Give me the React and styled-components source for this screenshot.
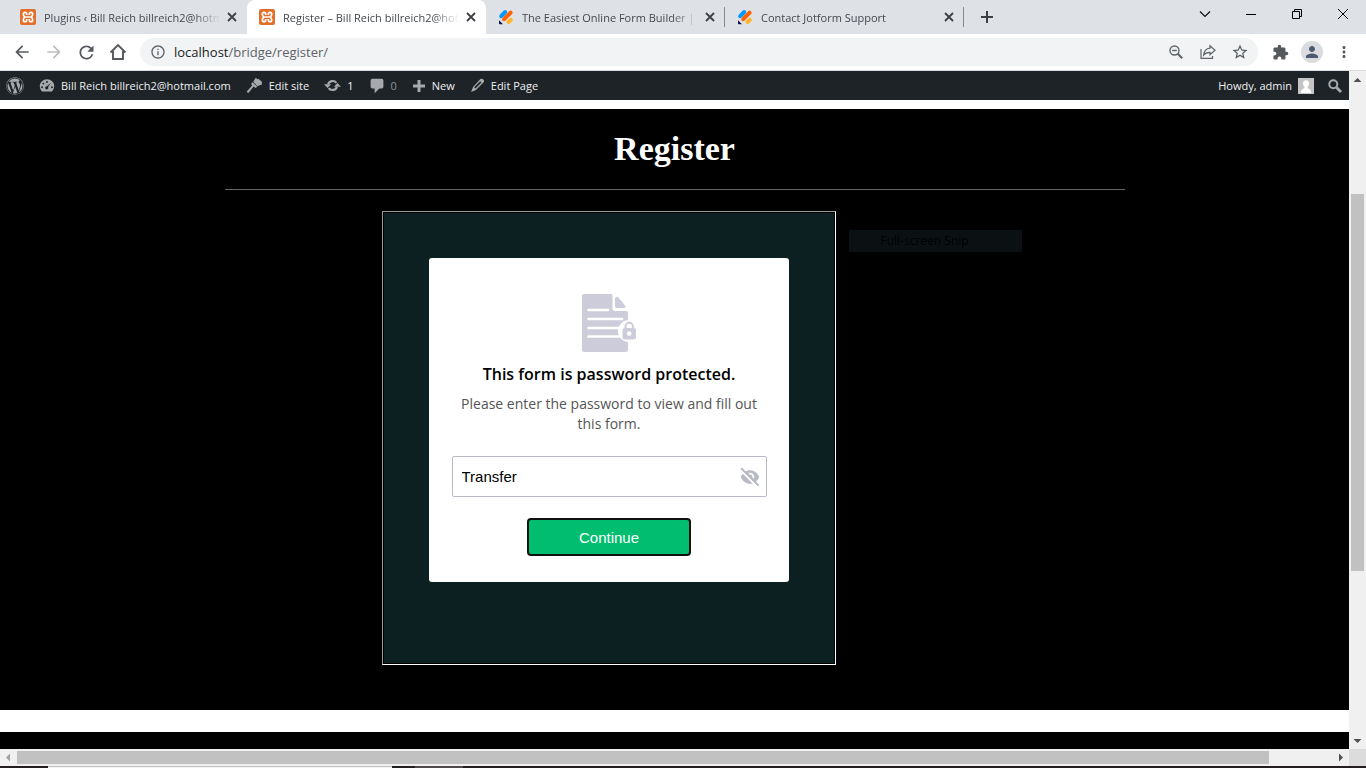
import React from "react";
import styled, { createGlobalStyle } from "styled-components";
import { FaWordpress } from "react-icons/fa";
import {
  MdArrowBack,
  MdArrowForward,
  MdRefresh,
  MdInfoOutline,
  MdStarOutline,
  MdExtension,
  MdPerson,
  MdMoreVert
} from "react-icons/md";

const XamppIcon = () => (
  <Favicon viewBox="0 0 16 16">
    <rect width="16" height="16" rx="2" fill="#e2702a" />
    <path
      d="M6.700 6V5a1.700 1.700 0 0 0-3.400 0c0 1.500.7 2 1.300 3-.6 1-1.300 1.500-1.300 3a1.700 1.700 0 0 0 3.400 0v-1M9.300 6V5a1.700 1.700 0 0 1 3.400 0c0 1.500-.7 2-1.300 3 .6 1 1.300 1.500 1.300 3a1.700 1.700 0 0 1-3.400 0v-1M5 8h6"
      fill="none"
      stroke="#fff"
      strokeWidth="1.700"
    />
  </Favicon>
);

const JotformIcon = () => (
  <Favicon viewBox="0 0 16 16">
    <g fill="none" strokeLinecap="round" strokeWidth="4">
      <path d="M3.2 7.2l4-4.2" stroke="#0099ff" />
      <path d="M6.2 10.2l6.4-6.6" stroke="#ff6100" />
      <path d="M10.6 13l2.2-2.2" stroke="#ffb629" />
    </g>
    <path d="M1 11.3l4 4H1.8a.8.8 0 0 1-.8-.8z" fill="#0a1551" />
  </Favicon>
);

const CloseIcon = () => (
  <svg width="10" height="10" viewBox="0 0 10 10">
    <path d="M1 1l8 8M9 1l-8 8" stroke="#3c4043" strokeWidth="1.800" />
  </svg>
);

const tabs = [
  { title: "Plugins ‹ Bill Reich billreich2@hotmail.com", icon: XamppIcon },
  {
    title: "Register – Bill Reich billreich2@hotmail.com",
    icon: XamppIcon,
    active: true
  },
  { title: "The Easiest Online Form Builder | Jotform", icon: JotformIcon },
  { title: "Contact Jotform Support", icon: JotformIcon }
];

const TabStrip = () => (
  <Tabs>
    {tabs.map(({ title, icon: Icon, active }, i) => (
      <Tab key={title} $active={active} $divider={i > 1}>
        <Icon />
        <TabTitle>{title}</TabTitle>
        <IconButton aria-label="Close tab" $width={16} $height={16}>
          <CloseIcon />
        </IconButton>
      </Tab>
    ))}
    <IconButton aria-label="New tab" $width={46} $height={34}>
      <svg width="12" height="12" viewBox="0 0 12 12">
        <path d="M6 0v12M0 6h12" stroke="#3c4043" strokeWidth="2" />
      </svg>
    </IconButton>
    <WindowButtons>
      <IconButton aria-label="Search tabs" $width={46} $height={28}>
        <svg width="12" height="12" viewBox="0 0 12 12">
          <path d="M1 3.500l5 5 5-5" fill="none" stroke="#111" strokeWidth="1.200" />
        </svg>
      </IconButton>
      <IconButton aria-label="Minimize" $width={46} $height={28}>
        <svg width="10" height="10" viewBox="0 0 10 10">
          <path d="M0 5.5h10" stroke="#000" />
        </svg>
      </IconButton>
      <IconButton aria-label="Restore" $width={46} $height={28}>
        <svg width="10" height="10" viewBox="0 0 10 10">
          <path
            d="M.5 2.5h7v7h-7zM2.5 2.5v-2h7v7h-2"
            fill="none"
            stroke="#000"
          />
        </svg>
      </IconButton>
      <IconButton aria-label="Close" $width={46} $height={28}>
        <svg width="10" height="10" viewBox="0 0 10 10">
          <path d="M0 0l10 10M10 0L0 10" stroke="#000" />
        </svg>
      </IconButton>
    </WindowButtons>
  </Tabs>
);

const Toolbar = () => (
  <ToolbarWrap>
    <IconButton aria-label="Back" $width={32} $height={32}>
      <MdArrowBack size={20} />
    </IconButton>
    <IconButton aria-label="Forward" $width={32} $height={32} $faded>
      <MdArrowForward size={20} />
    </IconButton>
    <IconButton aria-label="Reload" $width={32} $height={32}>
      <MdRefresh size={21} />
    </IconButton>
    <IconButton aria-label="Home" $width={32} $height={32}>
      <svg width="18" height="18" viewBox="0 0 18 18">
        <path
          d="M1.500 9.500L9 2l7.500 7.500M4 8v8h10V8"
          fill="none"
          stroke="#55595e"
          strokeWidth="1.900"
        />
      </svg>
    </IconButton>
    <AddressBar>
      <MdInfoOutline size={16} />
      <Address>
        <b>localhost</b>/bridge/register/
      </Address>
      <IconButton aria-label="Zoom" $width={32} $height={28}>
        <svg width="14" height="14" viewBox="0 0 14 14">
          <path
            d="M5.500 1a4.500 4.500 0 1 0 0 9 4.500 4.500 0 0 0 0-9zM3.200 5.500h4.600"
            fill="none"
            stroke="#5f6368"
            strokeWidth="1.400"
          />
          <path d="M8.800 8.800l4.400 4.400" stroke="#5f6368" strokeWidth="2" />
        </svg>
      </IconButton>
      <IconButton aria-label="Share" $width={32} $height={28}>
        <svg width="16" height="16" viewBox="0 0 16 16">
          <path
            d="M1 5v9.4h11.5V12M10 1.8l5 4.4-5 4.400V8.400C7.300 8.300 5.200 9 3.600 11.200 4 7.500 6.300 4.500 10 4.200z"
            fill="none"
            stroke="#5f6368"
            strokeWidth="1.2"
          />
        </svg>
      </IconButton>
      <IconButton aria-label="Bookmark" $width={32} $height={28}>
        <MdStarOutline size={18} />
      </IconButton>
    </AddressBar>
    <IconButton aria-label="Extensions" $width={32} $height={32}>
      <MdExtension size={17} />
    </IconButton>
    <IconButton aria-label="Profile" $width={32} $height={32}>
      <Profile>
        <MdPerson size={18} />
      </Profile>
    </IconButton>
    <IconButton aria-label="Menu" $width={32} $height={32}>
      <MdMoreVert size={18} />
    </IconButton>
  </ToolbarWrap>
);

const AdminBar = () => (
  <AdminWrap>
    <AdminLink href="#wp" aria-label="WordPress">
      <FaWordpress size={18} />
    </AdminLink>
    <AdminLink href="#site">
      <svg width="16" height="16" viewBox="0 0 20 20">
        <path
          d="M3.760 17h12.480A9 9 0 1 0 3.760 17z"
          fill="#a7aaad"
        />
        <g fill="#1d2327">
          <circle cx="10" cy="5" r="1.200" />
          <circle cx="5.500" cy="7" r="1.200" />
          <circle cx="3.800" cy="11.500" r="1.200" />
          <circle cx="16.200" cy="11.500" r="1.200" />
          <path d="M14.800 6l-3.400 5.200a2 2 0 1 1-1.600-1z" />
        </g>
      </svg>
      Bill Reich billreich2@hotmail.com
    </AdminLink>
    <AdminLink href="#customize">
      <svg width="17" height="17" viewBox="0 0 20 20">
        <path
          d="M8.500 5.500L11.500 1l2 1.500 1-.5 4.500 4-.5 1 .5 1.500-5.500 2.500zM7.800 6.200l5.500 5.200-2 1.400-2.200-1.600L3 18.500c-.8.800-2.600-1-1.800-1.800l6-6.800L6 8z"
          fill="#a7aaad"
        />
      </svg>
      Edit site
    </AdminLink>
    <AdminLink href="#updates">
      <svg width="17" height="17" viewBox="0 0 20 20">
        <path
          d="M4.800 8.500A5.600 5.600 0 0 1 14.600 7M15.200 11.500A5.600 5.600 0 0 1 5.400 13"
          fill="none"
          stroke="#a7aaad"
          strokeWidth="2.600"
        />
        <path d="M0 8.400h8.400L4.200 13zM11.600 11.600H20L15.800 7z" fill="#a7aaad" />
      </svg>
      1
    </AdminLink>
    <AdminLink href="#comments" $muted>
      <svg width="16" height="16" viewBox="0 0 20 20">
        <path
          d="M4 1h12a2 2 0 0 1 2 2v8a2 2 0 0 1-2 2h-3l-6 6v-6H4a2 2 0 0 1-2-2V3a2 2 0 0 1 2-2z"
          fill="#a7aaad"
        />
      </svg>
      0
    </AdminLink>
    <AdminLink href="#new">
      <svg width="14" height="14" viewBox="0 0 14 14">
        <path d="M7 1v12M1 7h12" stroke="#a7aaad" strokeWidth="3" />
      </svg>
      New
    </AdminLink>
    <AdminLink href="#edit">
      <svg width="15" height="15" viewBox="0 0 20 20">
        <path
          d="M13.900 1.400c1-1 3-.5 4 .7s1.200 2.800.3 3.700L8 16 1.500 18.500 4 12zM5.600 12.200l8-8 1.700 1.700-8 8z"
          fill="#a7aaad"
          fillRule="evenodd"
        />
      </svg>
      Edit Page
    </AdminLink>
    <AdminRight>
      <AdminLink href="#profile">
        Howdy, admin
        <svg width="16" height="16" viewBox="0 0 16 16">
          <rect width="16" height="16" fill="#c5c5c5" />
          <path
            d="M8 2.200c2 0 3 1.400 3 3.300 0 1.500-.6 2.700-1.400 3.400v1.300c2 .6 3.400 1.600 3.700 4.800H2.700c.3-3.200 1.700-4.200 3.700-4.800V8.900C5.600 8.200 5 7 5 5.500c0-1.900 1-3.300 3-3.300z"
            fill="#fff"
          />
        </svg>
      </AdminLink>
      <AdminLink href="#search" aria-label="Search">
        <svg width="14" height="14" viewBox="0 0 14 14">
          <circle
            cx="5.300"
            cy="5.300"
            r="4"
            fill="none"
            stroke="#a7aaad"
            strokeWidth="2"
          />
          <path d="M8.500 8.500l4.500 4.500" stroke="#a7aaad" strokeWidth="2.800" />
        </svg>
      </AdminLink>
    </AdminRight>
  </AdminWrap>
);

const LockedFileIcon = () => (
  <svg width="55" height="58" viewBox="0 0 55 58">
    <path
      d="M2 0h27a1.500 1.500 0 0 1 1.500 1.500V15a2 2 0 0 0 2 2H44a2 2 0 0 1 2 2v9a10.500 10.500 0 0 0 0 20v8a2 2 0 0 1-2 2H2a2 2 0 0 1-2-2V2a2 2 0 0 1 2-2z"
      fill="#cdccda"
    />
    <path
      d="M33 5c0-2 2-3 3.500-1.500l6.500 8c1.200 1.500.5 2.500-1 2.500h-7.500c-1 0-1.500-.6-1.500-1.500z"
      fill="#cdccda"
    />
    <path
      d="M6.500 16h19.500M6.500 25h33.500M6.500 34h31.500M6.500 42.500h31.500"
      stroke="#fff"
      strokeWidth="2.600"
      strokeLinecap="round"
    />
    <circle cx="47" cy="37" r="11" fill="#fff" />
    <path
      d="M43.500 35v-2.500a3.700 3.700 0 0 1 7.400 0V35"
      fill="none"
      stroke="#cdccda"
      strokeWidth="2"
    />
    <rect x="40.500" y="34" width="13.500" height="11.500" rx="2.500" fill="#cdccda" />
    <circle cx="47.200" cy="39.600" r="2.300" fill="#fff" />
  </svg>
);

const EyeOffIcon = () => (
  <svg width="20" height="20" viewBox="0 0 20 20">
    <path
      d="M.8 10C2.500 5.800 6 3.200 10 3.200s7.500 2.600 9.200 6.800c-1.700 4.200-5.200 6.800-9.200 6.800S2.500 14.200.8 10z"
      fill="#b8bac4"
    />
    <path
      d="M9 6.800a3.400 3.400 0 0 1 4.300 4.300"
      fill="none"
      stroke="#fff"
      strokeWidth="1.800"
    />
    <path d="M0 2.200l17 17" stroke="#fff" strokeWidth="2.400" />
    <path d="M1.200 1.200l17.400 17.400" stroke="#b8bac4" strokeWidth="2" />
  </svg>
);

const PasswordForm = () => (
  <Card onSubmit={e => e.preventDefault()}>
    <LockedFileIcon />
    <CardTitle>This form is password protected.</CardTitle>
    <CardText>
      Please enter the password to view and fill out this form.
    </CardText>
    <PasswordField>
      <PasswordInput
        type="text"
        aria-label="Password"
        defaultValue="Transfer"
      />
      <IconButton type="button" aria-label="Hide password" $width={32} $height={38}>
        <EyeOffIcon />
      </IconButton>
    </PasswordField>
    <SubmitButton type="submit">Continue</SubmitButton>
  </Card>
);

const Arrow = ({ points, color = "#505050" }) => (
  <svg width="17" height="17" viewBox="0 0 17 17">
    <polygon points={points} fill={color} />
  </svg>
);

const App = () => (
  <Screen>
    <GlobalStyle />
    <TabStrip />
    <Toolbar />
    <Viewport>
      <Page>
        <AdminBar />
        <Content>
          <PageTitle>Register</PageTitle>
          <Divider />
          <FormRow>
            <FormFrame>
              <PasswordForm />
            </FormFrame>
            <SnipLabel>Full-screen Snip</SnipLabel>
          </FormRow>
        </Content>
        <Footer />
      </Page>
      <VerticalBar>
        <Arrow points="4.500,11 8.500,7 12.500,11" />
        <VerticalTrack>
          <VerticalThumb />
        </VerticalTrack>
        <Arrow points="4.500,7 8.500,11 12.500,7" />
      </VerticalBar>
    </Viewport>
    <HorizontalBar>
      <Arrow points="10,4.500 6,8.500 10,12.500" color="#a3a3a3" />
      <HorizontalTrack>
        <HorizontalThumb />
      </HorizontalTrack>
      <Arrow points="7,4.500 11,8.500 7,12.500" />
      <Corner />
    </HorizontalBar>
    <Taskbar>
      <TaskSearch />
      <TaskItem />
    </Taskbar>
  </Screen>
);

export default App;

const GlobalStyle = createGlobalStyle`
  * {
    box-sizing: border-box;
  }
  body {
    margin: 0;
    font-family: "Open Sans", "Noto Sans", sans-serif;
    font-size: 11px;
  }
  svg {
    display: block;
    flex-shrink: 0;
  }
`;

const Screen = styled.div`
  display: flex;
  flex-direction: column;
  height: 100vh;
  overflow: hidden;
`;

const IconButton = styled.button`
  display: flex;
  align-items: center;
  justify-content: center;
  flex-shrink: 0;
  width: ${props => props.$width}px;
  height: ${props => props.$height}px;
  padding: 0;
  border: 0;
  background: none;
  color: ${props => (props.$faded ? "#bcbec1" : "#55595e")};
`;

const Tabs = styled.div`
  display: flex;
  flex-shrink: 0;
  height: 34px;
  padding-left: 8px;
  background-color: #dee1e6;
`;

const Tab = styled.div`
  display: flex;
  align-items: center;
  flex: 0 1 239px;
  min-width: 0;
  height: 34px;
  padding: 0 7px 0 12px;
  border-radius: 8px 8px 0 0;
  color: #45494d;
  background-color: ${props => (props.$active ? "#fff" : "transparent")};
  background-image: ${props =>
    props.$divider ? "linear-gradient(#85888d, #85888d)" : "none"};
  background-size: 1px 20px;
  background-position: right 7px;
  background-repeat: no-repeat;
`;

const TabTitle = styled.span`
  flex: 1;
  margin: 0 4px 0 8px;
  overflow: hidden;
  white-space: nowrap;
  mask-image: linear-gradient(to right, #000 85%, transparent);
`;

const Favicon = styled.svg`
  width: 16px;
  height: 16px;
`;

const WindowButtons = styled.div`
  display: flex;
  margin-left: auto;
`;

const ToolbarWrap = styled.div`
  display: flex;
  align-items: center;
  flex-shrink: 0;
  height: 37px;
  padding: 0 6px;
  border-bottom: 1px solid #dadce0;
  background-color: #fff;
`;

const AddressBar = styled.div`
  display: flex;
  align-items: center;
  flex: 1;
  height: 28px;
  margin: 0 6px;
  padding: 0 2px 0 10px;
  border-radius: 14px;
  background-color: #f1f3f4;
  color: #5f6368;
`;

const Address = styled.span`
  flex: 1;
  margin-left: 8px;
  font-size: 13px;

  b {
    font-weight: 400;
    color: #202124;
  }
`;

const Profile = styled.span`
  display: flex;
  align-items: center;
  justify-content: center;
  width: 22px;
  height: 22px;
  border-radius: 50%;
  background-color: #dadce0;
  color: #4d5a73;
`;

const Viewport = styled.div`
  display: flex;
  flex: 1;
  min-height: 0;
`;

const Page = styled.div`
  display: flex;
  flex-direction: column;
  flex: 1;
  min-width: 0;
  background-color: #fff;
`;

const AdminWrap = styled.nav`
  display: flex;
  align-items: center;
  gap: 15px;
  flex-shrink: 0;
  height: 29px;
  padding: 0 7px 0 6px;
  background-color: #1d2327;
`;

const AdminLink = styled.a`
  display: flex;
  align-items: center;
  gap: 6px;
  color: ${props => (props.$muted ? "#8c9196" : "#f0f0f1")};
  text-decoration: none;
  white-space: nowrap;

  svg {
    color: #a7aaad;
  }
`;

const AdminRight = styled.div`
  display: flex;
  align-items: center;
  gap: 14px;
  margin-left: auto;
`;

const Content = styled.main`
  display: flex;
  flex-direction: column;
  align-items: center;
  flex: 1;
  margin: 9px 0 22px;
  padding-top: 20px;
  background-color: #000;
`;

const PageTitle = styled.h1`
  margin: 0;
  color: #fff;
  font-family: "Liberation Serif", serif;
  font-size: 34px;
  line-height: 40px;
`;

const Divider = styled.hr`
  width: 100%;
  max-width: 900px;
  margin: 20px 0 21px;
  border: 0;
  border-top: 1px solid #666;
`;

const FormRow = styled.div`
  position: relative;
  width: 100%;
  max-width: 586px;
`;

const FormFrame = styled.div`
  width: 454px;
  height: 454px;
  padding: 45px;
  border: 1px solid #fff;
  border-top-color: #9a9a9a;
  border-left-color: #9a9a9a;
  outline: 1px solid #000;
  outline-offset: -2px;
  background-color: #0c1f21;
`;

const Card = styled.form`
  display: flex;
  flex-direction: column;
  align-items: center;
  margin: 1px;
  padding: 36px 22px 26px 23px;
  border-radius: 3px;
  background-color: #fff;
`;

const CardTitle = styled.h2`
  margin: 10px 0 8px;
  color: #000;
  font-size: 16px;
  font-weight: 600;
  line-height: 24px;
  white-space: nowrap;
`;

const CardText = styled.p`
  margin: 0;
  color: #555;
  font-size: 14px;
  line-height: 20px;
  text-align: center;
`;

const PasswordField = styled.div`
  display: flex;
  align-items: center;
  width: 100%;
  height: 41px;
  margin: 22px 0 21px;
  border: 1px solid #b8bac4;
  border-radius: 2px;
`;

const PasswordInput = styled.input`
  flex: 1;
  min-width: 0;
  padding: 0 0 0 9px;
  border: 0;
  outline: 0;
  color: #000;
  font-family: "Liberation Sans", sans-serif;
  font-size: 15px;
`;

const SubmitButton = styled.button`
  width: 164px;
  height: 38px;
  border: 2px solid #101010;
  border-radius: 4px;
  background-color: #01bd6f;
  color: #fff;
  font-family: "Liberation Sans", sans-serif;
  font-size: 15px;
`;

/* floats over the page beside the frame */
const SnipLabel = styled.span`
  position: absolute;
  top: 19px;
  left: 467px;
  width: 173px;
  padding-left: 32px;
  background-color: #0b1113;
  color: #000;
  font-size: 12px;
  line-height: 22px;
`;

const Footer = styled.footer`
  flex-shrink: 0;
  height: 17px;
  background-color: #000;
`;

const VerticalBar = styled.div`
  display: flex;
  flex-direction: column;
  width: 17px;
  background-color: #f0f0f0;
`;

const VerticalTrack = styled.div`
  flex: 1;
  padding: 106px 2px 0;
`;

const VerticalThumb = styled.div`
  height: 70%;
  background-color: #c1c1c1;
`;

const HorizontalBar = styled.div`
  display: flex;
  flex-shrink: 0;
  height: 17px;
  background-color: #f0f0f0;
`;

const HorizontalTrack = styled.div`
  flex: 1;
  padding: 2px 63px 2px 0;
`;

const HorizontalThumb = styled.div`
  height: 13px;
  background-color: #c1c1c1;
`;

const Corner = styled.div`
  width: 17px;
  background-color: #dcdcdc;
`;

const Taskbar = styled.div`
  display: flex;
  flex-shrink: 0;
  gap: 23px;
  height: 2px;
  padding-left: 48px;
  background-color: #231f20;
`;

const TaskSearch = styled.div`
  width: 344px;
  border-top: 1px solid #c1c1c1;
  background-color: #f3f3f3;
`;

const TaskItem = styled.div`
  width: 48px;
  background-color: #4e4a4b;
`;
